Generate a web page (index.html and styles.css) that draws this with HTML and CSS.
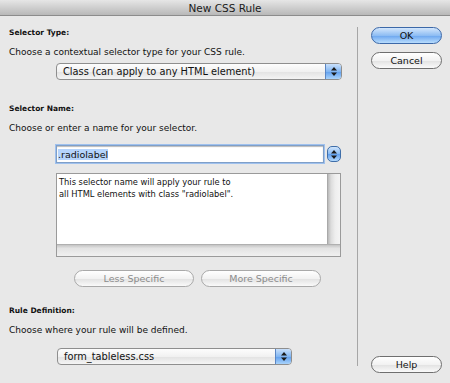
FILE: index.html
```html
<!DOCTYPE html>
<html>
<head>
    <title>New CSS Rule</title>
    <link rel="stylesheet" href="styles.css">
</head>
<body>
    <div class="window">
        <div class="titlebar">New CSS Rule</div>
        <div class="main">
            <div class="content">
                <!-- Selector type -->
                <div class="label">Selector Type:</div>
                <div class="hint">Choose a contextual selector type for your CSS rule.</div>
                <div class="select select-type">
                    <span class="select-text">Class (can apply to any HTML element)</span>
                    <span class="stepper">
                        <svg width="6" height="9" viewBox="0 0 6 9"><path d="M3 0L6 3.5H0z M3 9L0 5.5H6z" fill="#1a1a1a"/></svg>
                    </span>
                </div>

                <!-- Selector name -->
                <div class="label label-gap">Selector Name:</div>
                <div class="hint">Choose or enter a name for your selector.</div>
                <div class="name-row">
                    <div class="name-input"><span class="selected">.radiolabel</span></div>
                    <span class="round-stepper">
                        <svg width="6" height="9" viewBox="0 0 6 9"><path d="M3 0L6 3.5H0z M3 9L0 5.5H6z" fill="#1a1a1a"/></svg>
                    </span>
                </div>
                <div class="desc">
                    <div class="desc-body">
                        <div class="desc-text">This selector name will apply your rule to<br>all HTML elements with class "radiolabel".</div>
                        <div class="vscroll"></div>
                    </div>
                    <div class="hscroll"></div>
                </div>
                <div class="specific">
                    <button class="pill disabled">Less Specific</button>
                    <button class="pill disabled">More Specific</button>
                </div>

                <!-- Rule definition -->
                <div class="label label-gap2">Rule Definition:</div>
                <div class="hint">Choose where your rule will be defined.</div>
                <div class="select select-file">
                    <span class="select-text">form_tableless.css</span>
                    <span class="stepper">
                        <svg width="6" height="9" viewBox="0 0 6 9"><path d="M3 0L6 3.5H0z M3 9L0 5.5H6z" fill="#1a1a1a"/></svg>
                    </span>
                </div>
            </div>
            <div class="separator"></div>
            <div class="side">
                <button class="pill default">OK</button>
                <button class="pill">Cancel</button>
                <button class="pill help">Help</button>
            </div>
        </div>
    </div>
</body>
</html>
```

FILE: styles.css
```css
body {
    margin: 0;
    font-family: "DejaVu Sans", sans-serif;
    font-size: 9px;
    color: #111;
    background-color: #e8e8e8;
}

.window {
    width: 450px;
    height: 383px;
    background-color: #e8e8e8;
    overflow: hidden;
}

.titlebar {
    height: 16px;
    line-height: 16px;
    text-align: center;
    font-size: 10.5px;
    color: #1a1a1a;
    background: linear-gradient(#e6e6e6, #b8b8b8);
    border-bottom: 1px solid #8c8c8c;
    box-sizing: border-box;
}

.main {
    display: flex;
    height: 367px;
}

.content {
    width: 357px;
    padding: 11px 0 0 9px;
    box-sizing: border-box;
}

.label {
    font-weight: bold;
    font-size: 7.5px;
    line-height: 12px;
}

.label-gap {
    margin-top: 23px;
}

.label-gap2 {
    margin-top: 18px;
}

.hint {
    margin-top: 7px;
    line-height: 12px;
}

.select {
    display: flex;
    height: 17px;
    margin-top: 5px;
    margin-left: 47px;
    border: 1px solid #8e8e8e;
    border-radius: 4px;
    background: linear-gradient(#fdfdfd, #f1f1f1 50%, #e2e2e2 51%, #f4f4f4);
    box-sizing: border-box;
    overflow: hidden;
}

.select-type {
    width: 286px;
}

.select-file {
    width: 235px;
    margin-top: 12px;
    margin-left: 48px;
}

.select-text {
    flex: 1;
    padding-left: 6px;
    line-height: 15px;
    font-size: 9.8px;
}

.stepper {
    width: 15px;
    display: flex;
    align-items: center;
    justify-content: center;
    border-left: 1px solid #5a86c4;
    background: linear-gradient(#c9e0fb, #82b6f2 50%, #5f9eed 51%, #a9d3fb);
}

.name-row {
    display: flex;
    align-items: center;
    margin-top: 11px;
    margin-left: 47px;
}

.name-input {
    width: 268px;
    height: 18px;
    border: 1px solid #7f9fc8;
    box-shadow: 0 0 0 1px #9fc1ee, inset 0 1px 1px #bbb;
    background-color: #fff;
    box-sizing: border-box;
    padding: 2px 0 0 1px;
    font-size: 9.5px;
    line-height: 13px;
}

.selected {
    background-color: #b5d4fc;
}

.round-stepper {
    width: 14px;
    height: 16px;
    margin-left: 3px;
    border: 1px solid #3f6ea9;
    border-radius: 5px;
    box-sizing: border-box;
    display: flex;
    align-items: center;
    justify-content: center;
    background: linear-gradient(#d0e5fc, #86b9f3 50%, #609fee 51%, #b3d9fc);
}

.desc {
    width: 285px;
    height: 84px;
    margin-top: 10px;
    margin-left: 47px;
    border: 1px solid #9a9a9a;
    background-color: #fff;
    box-sizing: border-box;
    display: flex;
    flex-direction: column;
}

.desc-body {
    flex: 1;
    display: flex;
}

.desc-text {
    flex: 1;
    padding: 2px 0 0 2px;
    font-size: 8.3px;
    line-height: 12px;
}

.vscroll {
    width: 12px;
    background: linear-gradient(90deg, #b9b9b9, #dcdcdc 25%, #eeeeee 60%, #f4f4f4);
    border-left: 1px solid #a9a9a9;
}

.hscroll {
    height: 11px;
    background: linear-gradient(#c4c4c4, #e3e3e3 30%, #f0f0f0);
    border-top: 1px solid #b0b0b0;
}

.specific {
    display: flex;
    gap: 7px;
    margin-top: 13px;
    margin-left: 65px;
}

.pill {
    width: 71px;
    height: 17px;
    padding: 0;
    font-family: "DejaVu Sans", sans-serif;
    font-size: 9.5px;
    color: #111;
    border: 1px solid #6f6f6f;
    border-radius: 9px;
    background: linear-gradient(#ffffff, #f2f2f2 50%, #e1e1e1 51%, #fafafa);
    box-sizing: border-box;
}

.specific .pill {
    width: 120px;
}

.pill.disabled {
    color: #8c8c8c;
    border-color: #a9a9a9;
}

.pill.default {
    border-color: #3c68a8;
    background: linear-gradient(#d3e6fc, #8ebdf3 50%, #6aa5ef 51%, #b8dcfd);
}

.separator {
    width: 1px;
    height: 339px;
    margin-top: 11px;
    background-color: #a6a6a6;
}

.side {
    display: flex;
    flex-direction: column;
    gap: 8px;
    padding: 11px 0 10px 13px;
}

.help {
    margin-top: auto;
}
```
